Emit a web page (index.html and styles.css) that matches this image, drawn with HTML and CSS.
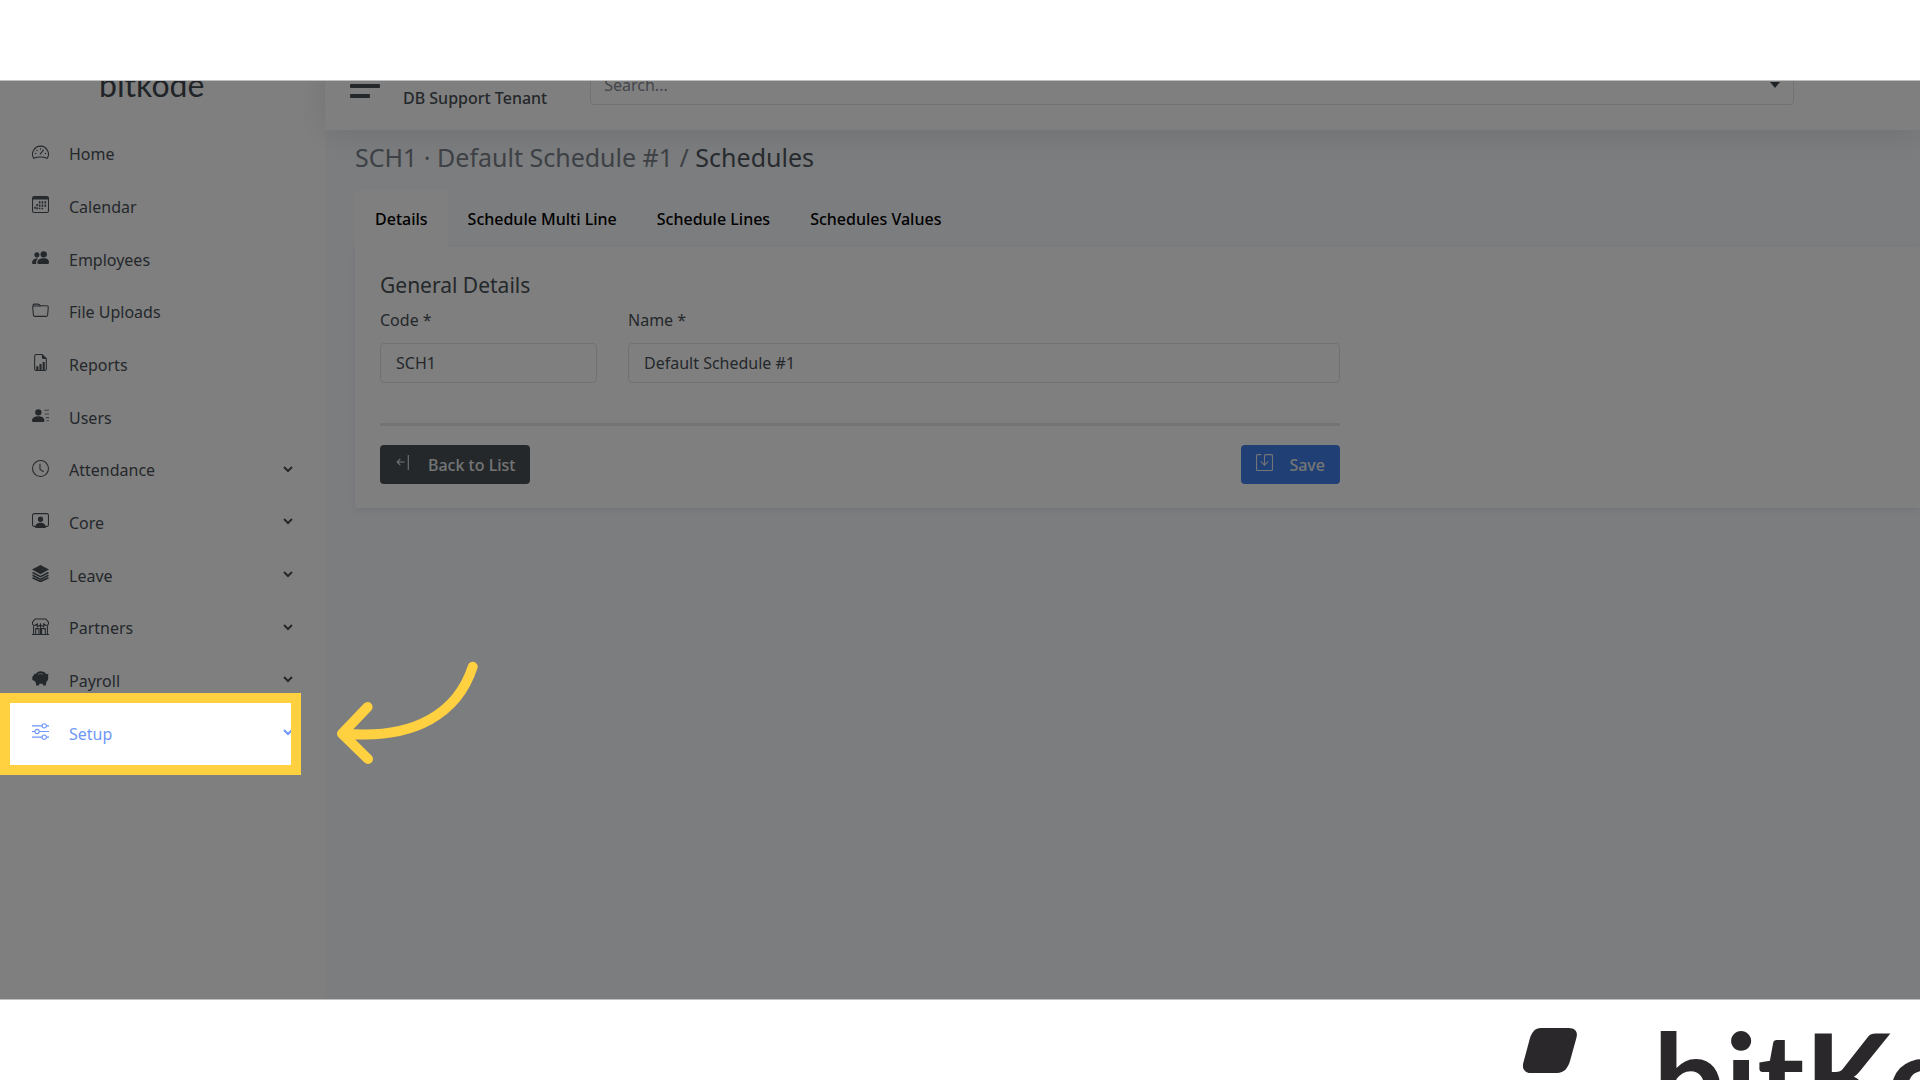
FILE: index.html
```html
<!DOCTYPE html>
<html lang="en">
<head>
<meta charset="utf-8">
<title>Schedules</title>
<meta name="viewport" content="width=device-width, initial-scale=1">
<link rel="stylesheet" href="styles.css">
</head>
<body>
<main class="stage">
  <div class="app">
    <aside class="sidebar">
      <a class="brand" href="#">bitkode</a>
      <nav class="nav" aria-label="Main">
        <a class="nav-item" href="#"><svg class="icon" viewBox="0 0 16 16"><path d="M1.8 13.5C.2 11.500.2 8.500 1.300 6.400 2.600 3.500 5 2 8 2s5.400 1.500 6.700 4.400c1.100 2.100 1.100 5.100-.5 7.100C12.500 12.600 10.500 12.200 8 12.200S3.500 12.600 1.800 13.500z"/><path d="M7.500 9.700 11 5.300M8 4v1.300M4.200 5.500l.9.900M2.800 9h1.300M12 9h1.300"/></svg><span>Home</span></a>
        <a class="nav-item" href="#"><svg class="icon" viewBox="0 0 16 16"><rect x=".5" y=".5" width="15" height="15" rx="1.500"/><path class="solid" d="M1 1h14v2.300H1z"/><path class="dots" d="M12.500 5v5M9.800 5v7.500M7.200 5v7.500M4.800 7.500v5M2.900 10v2.500"/></svg><span>Calendar</span></a>
        <a class="nav-item" href="#"><svg class="icon" viewBox="0 0 16 16"><g class="solid"><circle cx="11" cy="5" r="3"/><circle cx="4.600" cy="5.500" r="2.400"/><path d="M6 14c-.6 0-1-.4-1-1 0-2.200 2-4.200 6-4.200s5 2 5 4.200c0 .6-.4 1-1 1zM4 14c-.4-2 .2-3.600 1.700-5C2 8.600 0 10.600 0 13c0 .6.400 1 1 1z"/></g></svg><span>Employees</span></a>
        <a class="nav-item" href="#"><svg class="icon" viewBox="0 0 16 16"><path d="M.9 4.500V3.300c0-.8.500-1.300 1.300-1.300h3.400c1.100 0 1.700 1.500 2.700 1.500h5.400c1 0 1.700.7 1.600 1.700l-.6 7c-.1.800-.7 1.300-1.500 1.300H2.800c-.8 0-1.400-.5-1.500-1.300L.7 5.200C.7 4.200 1 3.800 2 3.800h6.500"/></svg><span>File Uploads</span></a>
        <a class="nav-item" href="#"><svg class="icon" viewBox="0 0 16 16"><path d="M9.500.5H4C2.900.5 2.500 1.200 2.500 2v12c0 .9.600 1.500 1.500 1.500h8c.9 0 1.500-.6 1.500-1.500V4.500z"/><path class="solid" d="M9.300.5 13.500 4.700H11c-1 0-1.700-.7-1.700-1.700zM4 11.500h2V15H4zM7 9.500h2V15H7zM10 7.500h2V15h-2z"/></svg><span>Reports</span></a>
        <a class="nav-item" href="#"><svg class="icon" viewBox="0 0 16 16"><path class="solid" d="M6 8a3 3 0 1 0 0-6 3 3 0 0 0 0 6zM1 14c-.6 0-1-.4-1-1 0-2 1.600-4.200 6-4.200s5.700 2.200 5.700 4.200c0 .6-.4 1-1 1z"/><path class="faint" d="M11.500 3h4.500M12 6.500h4M13 10h3M13.500 13h2.500"/></svg><span>Users</span></a>
        <a class="nav-item" href="#"><svg class="icon" viewBox="0 0 16 16"><circle cx="8" cy="8" r="7.500"/><path d="M7.500 3.500V9l3.500 2"/></svg><span>Attendance</span><svg class="chevron" viewBox="0 0 10 10"><path d="M1 3l4 4 4-4"/></svg></a>
        <a class="nav-item" href="#"><svg class="icon" viewBox="0 0 16 16"><path d="M3.500 13.500H2A1.500 1.500 0 0 1 .5 12V3A1.500 1.500 0 0 1 2 1.500h12A1.500 1.500 0 0 1 15.500 3v9a1.500 1.500 0 0 1-1.500 1.500h-1.500"/><path class="solid" d="M8 9.300a2.500 2.500 0 1 0 0-5 2.500 2.500 0 0 0 0 5zM3 15c0-3 2-4.800 5-4.800s5 1.800 5 4.800z"/></svg><span>Core</span><svg class="chevron" viewBox="0 0 10 10"><path d="M1 3l4 4 4-4"/></svg></a>
        <a class="nav-item" href="#"><svg class="icon" viewBox="0 0 16 16"><path class="solid" d="M8 0 16 4.300 8 8.600 0 4.300z"/><path class="layer" d="M.5 7 8 11l7.500-4M.5 9.600l7.500 4 7.500-4M.5 12 8 15.600 15.500 12"/></svg><span>Leave</span><svg class="chevron" viewBox="0 0 10 10"><path d="M1 3l4 4 4-4"/></svg></a>
        <a class="nav-item" href="#"><svg class="icon" viewBox="0 0 16 16"><path d="M3 .9h10L15.500 4v1.600a1.900 1.900 0 0 1-3.700 0 1.900 1.900 0 0 1-3.800 0 1.900 1.900 0 0 1-3.800 0 1.900 1.900 0 0 1-3.700 0V4zM1.500 7.500v8M14.500 7.500v8M0 15.500h16M3.500 15.500V10h3v5.500M9 15V10h3.500v5.500M5 5v4M8 5v10M11 5v4"/></svg><span>Partners</span><svg class="chevron" viewBox="0 0 10 10"><path d="M1 3l4 4 4-4"/></svg></a>
        <a class="nav-item" href="#"><svg class="icon" viewBox="0 0 16 16"><path class="solid" d="M8 1.200c2.700 0 4.500 1 5.500 2.800l2-.5-.4 2.200c.6 2.600 0 4.300-1.600 5.600L13 14.500h-2.500L10 13H7l-.5 1.500H4L3.300 11 1.500 9.800.3 9.500V6l1.200-.5L2 3.500l1.500.3C4.500 2.300 6 1.200 8 1.200z"/><path class="cut" d="M5.500 4.200c1.500-.8 3.500-.9 5-.2"/></svg><span>Payroll</span><svg class="chevron" viewBox="0 0 10 10"><path d="M1 3l4 4 4-4"/></svg></a>
        <a class="nav-item active" href="#"><svg class="icon" viewBox="0 0 16 16"><path d="M0 2.700h9.500M13.500 2.700H16M0 8h2.800M6.800 8H16M0 13.300h9.500M13.500 13.300H16"/><circle cx="11.500" cy="2.700" r="2"/><circle cx="4.800" cy="8" r="2"/><circle cx="11.500" cy="13.300" r="2"/></svg><span>Setup</span><svg class="chevron" viewBox="0 0 10 10"><path d="M1 3l4 4 4-4"/></svg></a>
      </nav>
    </aside>
    <div class="content">
      <header class="topbar">
        <button class="menu" type="button" aria-label="Toggle menu"><span class="bar"></span><span class="bar short"></span></button>
        <span class="tenant">DB Support Tenant</span>
        <div class="search">
          <input class="search-input" type="text" placeholder="Search..." aria-label="Search">
          <svg class="caret" viewBox="0 0 10 6"><path d="M0 0h10L5 6z"/></svg>
        </div>
      </header>
      <section class="page">
        <h1 class="title">SCH1 · Default Schedule #1 / <span class="current">Schedules</span></h1>
        <div class="tabs" role="tablist">
          <button class="tab selected" type="button" role="tab" aria-selected="true">Details</button>
          <button class="tab" type="button" role="tab">Schedule Multi Line</button>
          <button class="tab" type="button" role="tab">Schedule Lines</button>
          <button class="tab" type="button" role="tab">Schedules Values</button>
        </div>
        <form class="card">
          <h2 class="section-title">General Details</h2>
          <div class="fields">
            <div class="field"><label for="code">Code *</label><input class="input" id="code" type="text" value="SCH1"></div>
            <div class="field"><label for="name">Name *</label><input class="input" id="name" type="text" value="Default Schedule #1"></div>
          </div>
          <hr class="rule">
          <div class="actions">
            <button class="btn dark" type="button"><svg class="icon" viewBox="0 0 16 16"><path d="M2 7.500h7M5 4.500 2 7.500l3 3M12.500 1v14"/></svg>Back to List</button>
            <button class="btn primary" type="button"><svg class="icon" viewBox="0 0 16 16"><path d="M5 .6H1.500a1 1 0 0 0-1 1v13a1 1 0 0 0 1 1h13a1 1 0 0 0 1-1v-13a1 1 0 0 0-1-1H9.500Q8 .6 8 2v8.500M4.500 7 8 10.500 11.500 7"/></svg>Save</button>
          </div>
        </form>
      </section>
    </div>
  </div>
  <div class="spotlight"></div>
  <svg class="pointer" viewBox="0 0 144 106"><path d="M136.700 6.700C122 52 80 80 8 73.500M31.600 47 6 73.700 32 99"/></svg>
</main>
<footer class="footer">
  <svg class="mark" viewBox="0 0 54 45"><path d="M18 0h28c6 0 9 4 7.500 9.500L47 33c-2 7-6 12-13 12H8c-6 0-9-4-8-9L7 10C9 4 12 0 18 0z"/></svg>
  <span class="wordmark">bitKode</span>
</footer>
</body>
</html>
```
FILE: styles.css
```css
* { box-sizing: border-box; }

body {
  display: flex;
  flex-direction: column;
  height: 100vh;
  margin: 0;
  padding-top: 80px;
  overflow: hidden;
  background: #fff;
  color: #495057;
  font: 16px/24px "Noto Sans", "Open Sans", sans-serif;
}

a { color: inherit; text-decoration: none; }
button, input { font: inherit; color: inherit; }

.stage {
  position: relative;
  flex: 1;
  min-height: 0;
  overflow: hidden;
  border-top: 1px solid #c0c0c0;
  border-bottom: 1px solid #c0c0c0;
}

/* The recorded window is scrolled slightly past its top edge. */
.app {
  display: flex;
  height: calc(100% + 31px);
  margin-top: -31px;
}

.sidebar {
  flex: none;
  width: 325px;
  background: #fff;
}

.brand {
  display: block;
  height: 78px;
  padding: 15px 0 0 99px;
  color: #404850;
  font: 32px/40px Lato, sans-serif;
}

.nav {
  display: grid;
  grid-template-rows: repeat(12, 1fr);
  height: 632px;
}

.nav-item {
  display: flex;
  align-items: center;
  gap: 20px;
  padding: 0 32px;
}

.icon {
  flex: none;
  width: 17px;
  height: 17px;
  margin-bottom: 4px;
  fill: none;
  stroke: currentColor;
  stroke-width: 1;
}

.icon .solid { fill: currentColor; stroke: none; }
.icon .faint { opacity: 0.7; }
.icon .layer { stroke-width: 1.500; }
.icon .dots { stroke-width: 1.500; stroke-dasharray: 2 1; }
.icon .cut { stroke: #fff; opacity: 0.5; }

.chevron {
  width: 10px;
  height: 10px;
  margin-bottom: 3px;
  margin-left: auto;
  fill: none;
  stroke: currentColor;
  stroke-width: 2;
}

.active { color: #6f97f7; }

.content {
  display: flex;
  flex: 1;
  flex-direction: column;
  min-width: 0;
  background: #f8fafe;
}

.topbar {
  z-index: 1;
  display: flex;
  flex: none;
  align-items: center;
  height: 80px;
  padding: 0 126px 0 25px;
  background: #fff;
  box-shadow: 0 4px 32px rgba(0, 0, 0, 0.1);
}

.menu {
  display: flex;
  flex-direction: column;
  gap: 6px;
  width: 53px;
  padding: 2px 0 0;
  border: 0;
  background: none;
}

.bar { width: 30px; height: 4px; border-radius: 1px; background: #495057; }
.bar.short { width: 20px; }

.tenant {
  padding-top: 16px;
  font-weight: 500;
  white-space: nowrap;
}

.search {
  display: flex;
  flex: 1;
  align-items: center;
  height: 40px;
  margin: 0 0 10px 43px;
  padding: 0 13px;
  border: 1px solid #e0e4ea;
  border-radius: 4px;
}

.search-input {
  flex: 1;
  padding: 0;
  border: 0;
  outline: 0;
  background: none;
}

.search-input::placeholder { color: #868e96; opacity: 1; }

.caret { width: 10px; height: 6px; fill: #404850; }

.page { padding: 9px 0 0 30px; }

.title {
  margin: 0 0 15px;
  color: #7c838b;
  font-size: 25px;
  font-weight: 400;
  line-height: 36px;
}

.current { color: #50575e; }

.tabs { display: flex; }

.tab {
  height: 57px;
  padding: 0 20px;
  border: 0;
  border-radius: 4px 4px 0 0;
  background: none;
  color: #000;
  font-weight: 500;
}

.tab.selected { background: #fff; }

.card {
  padding: 24px 25px;
  background: #fff;
  box-shadow: 0 2px 6px rgba(40, 50, 80, 0.08);
}

.section-title {
  margin: 0 0 9px;
  font-size: 21px;
  font-weight: 400;
  line-height: 28px;
}

.fields {
  display: grid;
  grid-template-columns: 217px 1fr;
  gap: 31px;
  max-width: 960px;
}

.field { display: flex; flex-direction: column; gap: 11px; }

.input {
  width: 100%;
  height: 40px;
  padding: 0 15px;
  border: 1px solid #dfe3e9;
  border-radius: 4px;
  background: #fff;
}

.rule {
  max-width: 960px;
  height: 3px;
  margin: 40px 0 19px;
  border: 0;
  background: #e8e8e8;
}

.actions {
  display: flex;
  justify-content: space-between;
  max-width: 960px;
}

.btn {
  display: flex;
  align-items: center;
  gap: 16px;
  height: 39px;
  padding: 0 15px;
  border: 0;
  border-radius: 4px;
  color: #e8eaec;
  font-weight: 500;
}

.btn.dark { background: #495057; }
.btn.primary { background: #417fea; }

/* Dims everything around the highlighted menu entry. */
.spotlight {
  position: absolute;
  z-index: 2;
  top: 612px;
  left: 0;
  width: 301px;
  height: 82px;
  border: 10px solid #ffd140;
  box-shadow: 0 0 0 2000px rgba(0, 0, 0, 0.5);
}

.pointer {
  position: absolute;
  z-index: 3;
  top: 579px;
  left: 336px;
  width: 144px;
  height: 106px;
  fill: none;
  stroke: #ffd140;
  stroke-width: 10;
  stroke-linecap: round;
  stroke-linejoin: round;
}

.footer {
  display: flex;
  flex: none;
  justify-content: flex-end;
  gap: 76px;
  height: 80px;
  padding-top: 28px;
  overflow: hidden;
  color: #2b282b;
}

.mark { flex: none; width: 54px; height: 45px; fill: currentColor; }

.wordmark {
  width: 267px;
  font: 700 127px/96px Lato, sans-serif;
}
```
